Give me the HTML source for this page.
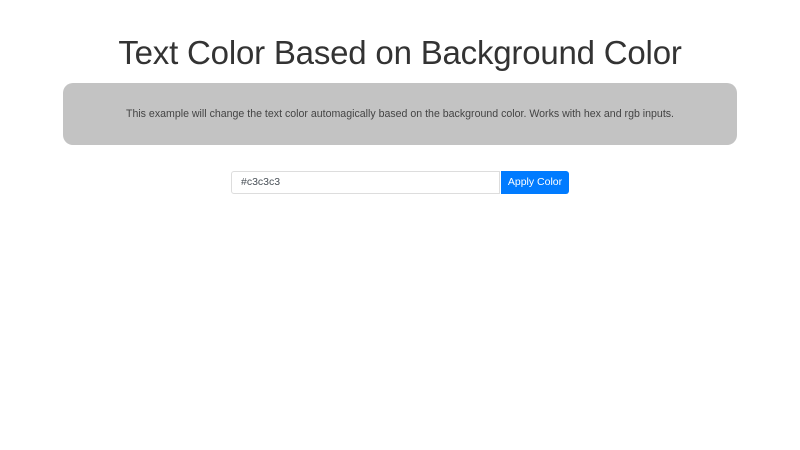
<!DOCTYPE html>
<html><head><style>
body{margin:0;background:#fff;font-family:"Liberation Sans",sans-serif;color:#212529}
h1{position:absolute;left:0;width:800px;top:31px;margin:0;text-align:center;font-weight:normal;font-size:33px;line-height:44px;color:#333;letter-spacing:-0.2px}
.box{position:absolute;left:63px;top:83px;width:674px;height:62px;background:#c3c3c3;border-radius:10px;text-align:center;font-size:10.6px;line-height:62px;color:#444}
.inp{position:absolute;left:231px;top:171px;width:258px;height:21px;border:1px solid #ddd;border-radius:3px 0 0 3px;font-size:10.5px;line-height:21px;padding-left:9px;color:#495057}
.btn{position:absolute;left:501px;top:171px;width:68px;height:23px;background:#007bff;color:#fff;border-radius:0 3px 3px 0;font-size:10.5px;line-height:23px;text-align:center}
</style></head><body>
<h1>Text Color Based on Background Color</h1>
<div class="box">This example will change the text color automagically based on the background color. Works with hex and rgb inputs.</div>
<div class="inp">#c3c3c3</div>
<div class="btn">Apply Color</div>
</body></html>
